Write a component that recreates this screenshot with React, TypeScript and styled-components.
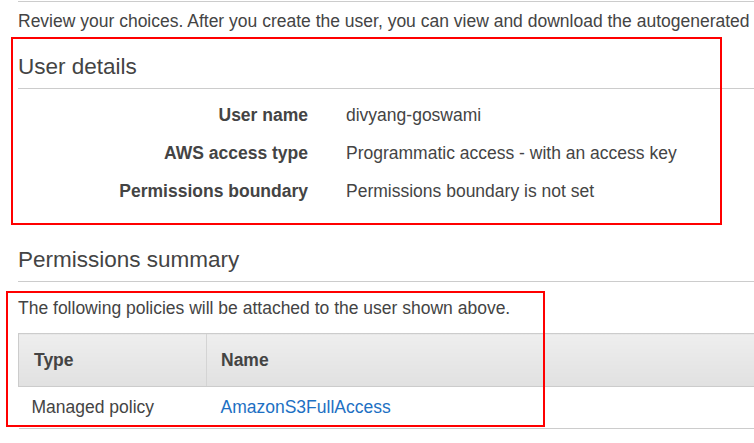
import styled, { createGlobalStyle } from "styled-components";

const GlobalStyle = createGlobalStyle`
  html, body {
    margin: 0;
    padding: 0;
    background: #ffffff;
  }
  body {
    font-family: "Liberation Sans", Arial, sans-serif;
    color: #444444;
    overflow: hidden;
  }
`;

const Page = styled.div`
  position: relative;
  width: 754px;
  height: 443px;
  overflow: hidden;
  padding: 1px 0 0 18px;
  box-sizing: border-box;
`;

const TopRule = styled.div`
  border-top: 1px solid #cccccc;
  margin-right: -20px;
`;

const Intro = styled.p`
  margin: 9px 0 0 0;
  font-size: 17.5px;
  line-height: 20px;
  white-space: nowrap;
`;

const SectionTitle = styled.h2<{ $gap: number }>`
  margin: ${(p) => p.$gap}px -20px 0 0;
  padding-bottom: 8px;
  font-size: 22.5px;
  line-height: 26px;
  font-weight: normal;
  color: #444444;
  border-bottom: 1px solid #cccccc;
`;

const Details = styled.div`
  display: grid;
  grid-template-columns: 290px auto;
  column-gap: 38px;
  row-gap: 18px;
  margin-top: 16px;
  font-size: 17.5px;
  line-height: 20px;
`;

const Label = styled.div`
  text-align: right;
  font-weight: bold;
`;

const Value = styled.div`
  white-space: nowrap;
`;

const Note = styled.p`
  margin: 16px 0 0 0;
  font-size: 17.5px;
  line-height: 20px;
`;

const Table = styled.table`
  margin-top: 15px;
  width: 760px;
  border-collapse: collapse;
  font-size: 17.5px;
  line-height: 20px;
`;

const HeadCell = styled.th<{ $width?: number }>`
  text-align: left;
  font-weight: bold;
  width: ${(p) => (p.$width ? `${p.$width}px` : "auto")};
  padding: 16px 14px 16px 14px;
  background: linear-gradient(#eeeeee, #e1e1e1);
  border-top: 1px solid #cccccc;
  border-bottom: 1px solid #cccccc;
  border-left: 1px solid #d4d4d4;
  box-sizing: border-box;
  &:first-child {
    padding-left: 15px;
    border-left: 1px solid #cccccc;
  }
`;

const Cell = styled.td`
  padding: 10px 14px 11px 14px;
  border-bottom: 1px solid #cccccc;
  white-space: nowrap;
  &:first-child {
    padding-left: 13px;
  }
`;

const PolicyLink = styled.a`
  color: #1d70c3;
  text-decoration: none;
`;

const Marker = styled.div<{ $x: number; $y: number; $w: number; $h: number }>`
  position: absolute;
  left: ${(p) => p.$x}px;
  top: ${(p) => p.$y}px;
  width: ${(p) => p.$w}px;
  height: ${(p) => p.$h}px;
  border: 2px solid #ff0000;
  box-sizing: border-box;
  pointer-events: none;
`;

const details = [
  { label: "User name", value: "divyang-goswami" },
  { label: "AWS access type", value: "Programmatic access - with an access key" },
  { label: "Permissions boundary", value: "Permissions boundary is not set" },
];

export default function App() {
  return (
    <Page>
      <GlobalStyle />
      <TopRule />
      <Intro>
        Review your choices. After you create the user, you can view and download the autogenerated
      </Intro>

      <SectionTitle $gap={23}>User details</SectionTitle>
      <Details>
        {details.map((d) => [
          <Label key={d.label + "-l"}>{d.label}</Label>,
          <Value key={d.label + "-v"}>{d.value}</Value>,
        ])}
      </Details>

      <SectionTitle $gap={46}>Permissions summary</SectionTitle>
      <Note>The following policies will be attached to the user shown above.</Note>
      <Table>
        <thead>
          <tr>
            <HeadCell $width={188}>Type</HeadCell>
            <HeadCell>Name</HeadCell>
          </tr>
        </thead>
        <tbody>
          <tr>
            <Cell>Managed policy</Cell>
            <Cell>
              <PolicyLink href="#">AmazonS3FullAccess</PolicyLink>
            </Cell>
          </tr>
        </tbody>
      </Table>

      <Marker $x={11} $y={37} $w={711} $h={188} />
      <Marker $x={6} $y={291} $w={539} $h={136} />
    </Page>
  );
}
